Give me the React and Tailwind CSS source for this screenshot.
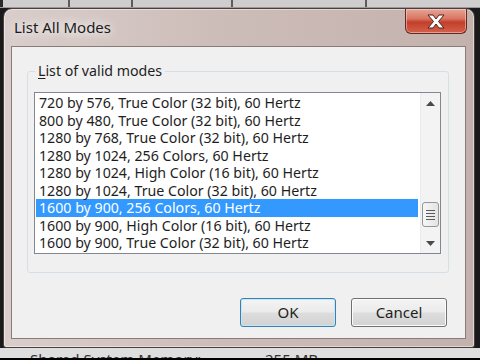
import React from "react";

const modes = [
  "720 by 576, True Color (32 bit), 60 Hertz",
  "800 by 480, True Color (32 bit), 60 Hertz",
  "1280 by 768, True Color (32 bit), 60 Hertz",
  "1280 by 1024, 256 Colors, 60 Hertz",
  "1280 by 1024, High Color (16 bit), 60 Hertz",
  "1280 by 1024, True Color (32 bit), 60 Hertz",
  "1600 by 900, 256 Colors, 60 Hertz",
  "1600 by 900, High Color (16 bit), 60 Hertz",
  "1600 by 900, True Color (32 bit), 60 Hertz",
];

const selected = 6;

const Arrow = ({ down }) => (
  <svg width="9" height="5" viewBox="0 0 9 5">
    {down ? (
      <path d="M0 0h9L4.5 5z" fill="#4a4a4a" />
    ) : (
      <path d="M0 5h9L4.5 0z" fill="#4a4a4a" />
    )}
  </svg>
);

const Button = ({ children, primary }) => (
  <button
    className={`w-[96px] h-[29px] rounded-[3px] border text-[15px] leading-none text-[#1e1e1e] bg-[linear-gradient(180deg,#f4f4f4_0%,#ebebeb_48%,#dddddd_52%,#d2d2d2_100%)] ${
      primary
        ? "border-[#3c7fb1] shadow-[inset_0_0_0_1px_#c4e6f7]"
        : "border-[#707070] shadow-[inset_0_0_0_1px_#fcfcfc]"
    }`}
  >
    {children}
  </button>
);

export default function App() {
  return (
    <div className="w-[480px] h-[360px] overflow-hidden bg-[#1a1a1a] flex flex-col font-['Noto_Sans',sans-serif] text-[#1e1e1e]">
      {/* window behind */}
      <div className="h-[8px] flex bg-[#cfcdcd] border-b border-[#9a9898]">
        <div className="w-[3px] bg-[#2a2a2a]" />
        <div className="w-[67px] border-r-2 border-[#5c5c5c]" />
        <div className="w-[63px] border-r-2 border-[#5c5c5c]" />
        <div className="w-[100px] border-r-2 border-[#5c5c5c]" />
        <div className="w-[134px] border-r-2 border-[#5c5c5c]" />
        <div className="flex-1" />
      </div>

      <div className="ml-[3px] w-[472px] h-[340px] shrink-0 rounded-t-[9px] rounded-b-[3px] border border-[#4a3f3e] bg-[linear-gradient(90deg,#d9cecb_0%,#cdbdb9_45%,#c3b1ad_100%)] shadow-[inset_0_0_0_1px_rgba(255,255,255,0.45)] flex flex-col">
        <div className="h-[37px] flex justify-between items-start">
          <span className="pl-[10px] pt-[8px] text-[15px] leading-[20px] text-[#1b1b1b] [text-shadow:0_0_8px_#fff,0_0_14px_#fff]">
            List All Modes
          </span>
          <div className="mr-[7px] w-[62px] h-[25px] rounded-b-[6px] border border-t-0 border-[#5e2a22] bg-[linear-gradient(180deg,#e6a597_0%,#d97562_40%,#c23f2b_55%,#d5614b_100%)] shadow-[inset_0_0_0_1px_rgba(255,220,210,0.5)] flex items-center justify-center">
            <svg width="20" height="15" viewBox="0 0 20 15">
              <path
                d="M2 1h5l3 4 3-4h5l-5.5 6.5L18 14h-5l-3-4-3 4H2l5.5-6.5z"
                fill="#fff"
                stroke="#4a2420"
                strokeWidth="1"
                strokeLinejoin="round"
              />
            </svg>
          </div>
        </div>

        <div className="ml-[7px] w-[455px] h-[293px] bg-[#f0f0f0] border border-[#8a7b78] flex flex-col">
          <fieldset className="mt-[15px] ml-[15px] w-[422px] border border-[#d5dfe5] rounded-[3px] pb-[18px]">
            <legend className="ml-[7px] px-[3px] text-[14.2px] leading-[18px]">
              <span className="underline underline-offset-2">L</span>ist of valid modes
            </legend>
            <div className="mt-[12px] ml-[6px] w-[407px] h-[162px] border border-[#828790] bg-white flex">
              <div className="flex-1 pl-[1px] pr-[2px] pt-[1px]">
                {modes.map((m, i) => (
                  <div
                    key={m}
                    className={`h-[17.5px] leading-[17.5px] pl-[3px] text-[14.2px] whitespace-nowrap ${
                      i === selected ? "bg-[#3399ff] text-white" : ""
                    }`}
                  >
                    {m}
                  </div>
                ))}
              </div>
              <div className="w-[20px] bg-[#f3f3f3] border-l border-[#ebebeb] flex flex-col">
                <div className="h-[20px] flex items-center justify-center">
                  <Arrow />
                </div>
                <div className="flex-1" />
                <div className="mx-[1px] h-[25px] rounded-[3px] border border-[#969696] bg-[linear-gradient(90deg,#f6f6f6,#e4e4e4)] flex flex-col items-center justify-center gap-[2px]">
                  <div className="w-[9px] h-[1px] bg-[#5a5a5a]" />
                  <div className="w-[9px] h-[1px] bg-[#5a5a5a]" />
                  <div className="w-[9px] h-[1px] bg-[#5a5a5a]" />
                  <div className="w-[9px] h-[1px] bg-[#5a5a5a]" />
                </div>
                <div className="h-[6px]" />
                <div className="h-[20px] flex items-center justify-center">
                  <Arrow down />
                </div>
              </div>
            </div>
          </fieldset>

          <div className="mt-[25px] pr-[18px] flex justify-end gap-[15px]">
            <Button primary>OK</Button>
            <Button>Cancel</Button>
          </div>
        </div>
      </div>

      <div className="flex-1 bg-[#dedede] overflow-hidden flex text-[15px] leading-[18px] text-[#333] pt-[2px]">
        <span className="pl-[30px] w-[265px]">Shared System Memory:</span>
        <span>255 MB</span>
      </div>
      <div className="h-[2px] bg-black" />
    </div>
  );
}
